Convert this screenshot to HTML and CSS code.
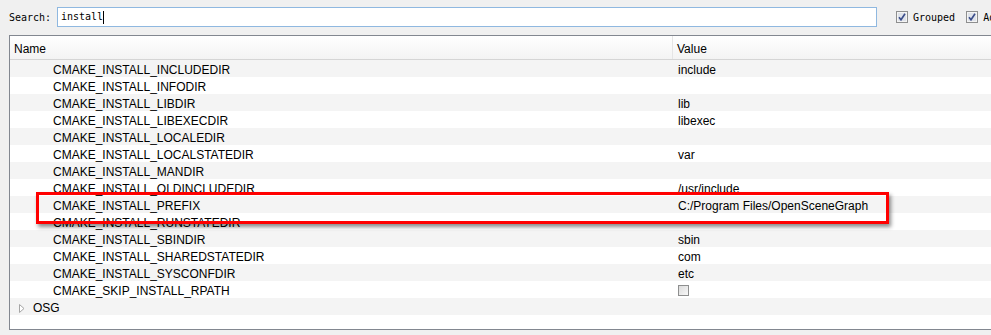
FILE: index.html
```html
<!DOCTYPE html>
<html lang="en">

<head>
    <meta charset="UTF-8">
    <title>CMake Cache</title>
    <link rel="stylesheet" href="styles.css">
</head>

<body>
    <div class="toolbar">
        <span class="label">Search:</span>
        <div class="search">install<span class="caret"></span></div>
        <label class="check">
            <svg width="12" height="12" viewBox="0 0 12 12"><rect x="0.5" y="0.5" width="11" height="11" fill="#f4f4f4" stroke="#8e8f8f"/><rect x="2" y="2" width="8" height="8" fill="#dfe3ea"/><path d="M3 6.2 L5 8.8 L9 2.8" fill="none" stroke="#3b4d8a" stroke-width="1.6"/></svg>
            <span>Grouped</span>
        </label>
        <label class="check">
            <svg width="12" height="12" viewBox="0 0 12 12"><rect x="0.5" y="0.5" width="11" height="11" fill="#f4f4f4" stroke="#8e8f8f"/><rect x="2" y="2" width="8" height="8" fill="#dfe3ea"/><path d="M3 6.2 L5 8.8 L9 2.8" fill="none" stroke="#3b4d8a" stroke-width="1.6"/></svg>
            <span>Advanced</span>
        </label>
    </div>

    <div class="tree">
        <div class="header">
            <div class="col-name">Name</div>
            <div class="col-value">Value</div>
        </div>
        <div class="row"><div class="col-name child">CMAKE_INSTALL_INCLUDEDIR</div><div class="col-value">include</div></div>
        <div class="row"><div class="col-name child">CMAKE_INSTALL_INFODIR</div><div class="col-value"></div></div>
        <div class="row"><div class="col-name child">CMAKE_INSTALL_LIBDIR</div><div class="col-value">lib</div></div>
        <div class="row"><div class="col-name child">CMAKE_INSTALL_LIBEXECDIR</div><div class="col-value">libexec</div></div>
        <div class="row"><div class="col-name child">CMAKE_INSTALL_LOCALEDIR</div><div class="col-value"></div></div>
        <div class="row"><div class="col-name child">CMAKE_INSTALL_LOCALSTATEDIR</div><div class="col-value">var</div></div>
        <div class="row"><div class="col-name child">CMAKE_INSTALL_MANDIR</div><div class="col-value"></div></div>
        <div class="row"><div class="col-name child">CMAKE_INSTALL_OLDINCLUDEDIR</div><div class="col-value">/usr/include</div></div>
        <div class="row"><div class="col-name child">CMAKE_INSTALL_PREFIX</div><div class="col-value">C:/Program Files/OpenSceneGraph</div></div>
        <div class="row"><div class="col-name child">CMAKE_INSTALL_RUNSTATEDIR</div><div class="col-value"></div></div>
        <div class="row"><div class="col-name child">CMAKE_INSTALL_SBINDIR</div><div class="col-value">sbin</div></div>
        <div class="row"><div class="col-name child">CMAKE_INSTALL_SHAREDSTATEDIR</div><div class="col-value">com</div></div>
        <div class="row"><div class="col-name child">CMAKE_INSTALL_SYSCONFDIR</div><div class="col-value">etc</div></div>
        <div class="row"><div class="col-name child">CMAKE_SKIP_INSTALL_RPATH</div><div class="col-value"><span class="box"></span></div></div>
        <div class="row"><div class="col-name group"><svg class="arrow" width="6" height="9" viewBox="0 0 6 9"><path d="M0.5 0.5 L5 4.5 L0.5 8.5 Z" fill="#fff" stroke="#a6a6a6"/></svg>OSG</div><div class="col-value"></div></div>
        <div class="row"></div>

        <!-- highlight around the prefix row -->
        <div class="mark"></div>
    </div>
</body>

</html>
```

FILE: styles.css
```css
body {
    margin: 0;
    padding: 0;
    background-color: #f0f0f0;
    font-family: "Liberation Sans", Arial, sans-serif;
    font-size: 12px;
    color: #000;
    overflow: hidden;
}

.toolbar {
    height: 35px;
    display: flex;
    align-items: center;
    padding-left: 9px;
    padding-bottom: 1px;
    box-sizing: border-box;
    font-family: "DejaVu Sans Mono", monospace;
    font-size: 10px;
    white-space: nowrap;
}

.toolbar > * {
    flex-shrink: 0;
}

.label {
    width: 48px;
}

.search {
    width: 815px;
    height: 18px;
    line-height: 18px;
    border: 1px solid #8fb8e0;
    background: #fff;
    padding-left: 3px;
    display: flex;
    align-items: center;
}

.caret {
    display: inline-block;
    width: 1px;
    height: 13px;
    background: #000;
}

.check {
    display: flex;
    align-items: center;
    gap: 5px;
    margin-left: 19px;
}

.check + .check {
    margin-left: 11px;
}

.tree {
    position: relative;
    margin-left: 9px;
    margin-right: -20px;
    border: 1px solid #828790;
    border-right: none;
    background: #fff;
    height: 293px;
}

.header {
    display: flex;
    height: 24px;
    background: linear-gradient(#ffffff, #f3f3f3);
    border-bottom: 1px solid #d5d5d5;
    box-sizing: border-box;
}

.header .col-name {
    border-right: 1px solid #e5e5e5;
}

.header .col-name,
.header .col-value {
    padding-top: 5px;
    line-height: 16px;
}

.col-name {
    width: 658px;
    padding-left: 4px;
}

.col-value {
    padding-left: 4px;
}

.row {
    display: flex;
    height: 17px;
    line-height: 14px;
    padding-top: 3px;
    box-sizing: border-box;
}

.row:nth-child(even) {
    background: #f4f4f4;
}

.child {
    padding-left: 43px;
    width: 620px;
    border-right: 1px solid transparent;
}

.group {
    padding-left: 9px;
    width: 654px;
    border-right: 1px solid transparent;
    display: flex;
    align-items: center;
}

.arrow {
    margin-right: 8px;
}

.box {
    display: inline-block;
    width: 11px;
    height: 11px;
    margin-top: 1px;
    border: 1px solid #8e8f8f;
    background: linear-gradient(135deg, #dcdcdc, #f8f8f8);
    box-sizing: border-box;
    vertical-align: top;
}

.mark {
    position: absolute;
    left: 26px;
    top: 156px;
    width: 847px;
    height: 26px;
    border: 3px solid #f00;
    box-shadow: 2px 3px 4px rgba(0, 0, 0, 0.45);
}
```
